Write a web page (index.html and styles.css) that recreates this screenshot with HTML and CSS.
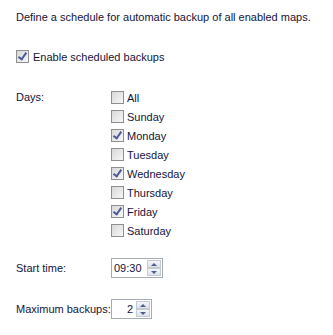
FILE: index.html
```html
<!DOCTYPE html>
<html lang="en">
<head>
  <meta charset="UTF-8" />
  <title>Scheduled Backups</title>
  <link rel="stylesheet" href="styles.css">
</head>
<body>
  <div class="page">
    <p class="intro">Define a schedule for automatic backup of all enabled maps.</p>

    <label class="check enable">
      <span class="box checked"></span>Enable scheduled backups
    </label>

    <div class="row days">
      <span class="label">Days:</span>
      <div class="day-list">
        <label class="check"><span class="box"></span>All</label>
        <label class="check"><span class="box"></span>Sunday</label>
        <label class="check"><span class="box checked"></span>Monday</label>
        <label class="check"><span class="box"></span>Tuesday</label>
        <label class="check"><span class="box checked"></span>Wednesday</label>
        <label class="check"><span class="box"></span>Thursday</label>
        <label class="check"><span class="box checked"></span>Friday</label>
        <label class="check"><span class="box"></span>Saturday</label>
      </div>
    </div>

    <div class="row start">
      <span class="label">Start time:</span>
      <div class="spin time">
        <span class="value">09:30</span>
        <span class="arrows"><span class="up"></span><span class="down"></span></span>
      </div>
    </div>

    <div class="row max">
      <span class="label">Maximum backups:</span>
      <div class="spin count">
        <span class="value">2</span>
        <span class="arrows"><span class="up"></span><span class="down"></span></span>
      </div>
    </div>
  </div>
</body>
</html>
```

FILE: styles.css
```css
body {
  margin: 0;
  background: #fff;
  font-family: "Liberation Sans", Arial, sans-serif;
  font-size: 11px;
  color: #14143a;
}
.page {
  padding: 11px 16px 0 16px;
}
.intro {
  margin: 0 0 23px 0;
  line-height: 13px;
  white-space: nowrap;
}
.check {
  display: flex;
  align-items: center;
  height: 19px;
  white-space: nowrap;
}
.enable {
  margin-bottom: 22px;
}
.enable .box {
  margin-right: 4px;
}
.box {
  width: 11px;
  height: 11px;
  border: 1px solid #8f8f8f;
  background: linear-gradient(135deg, #d8d8d8, #f7f7f7);
  margin-right: 3px;
  position: relative;
  flex-shrink: 0;
}
.box.checked::after {
  content: "";
  position: absolute;
  left: 3px;
  top: 0px;
  width: 3px;
  height: 7px;
  border: solid #4a5a9a;
  border-width: 0 2px 2px 0;
  transform: rotate(35deg);
}
.row {
  display: flex;
}
.label {
  width: 95px;
  line-height: 19px;
  white-space: nowrap;
  flex-shrink: 0;
}
.days {
  margin-bottom: 18px;
}
.start {
  align-items: center;
  margin-bottom: 21px;
}
.max {
  align-items: center;
}
.spin {
  display: flex;
  border: 1px solid #a5acb5;
  height: 18px;
}
.spin .value {
  line-height: 18px;
  padding: 0 2px;
}
.time .value {
  width: 30px;
}
.count .value {
  width: 19px;
  text-align: right;
}
.arrows {
  display: flex;
  flex-direction: column;
  width: 14px;
  margin: 1px;
}
.arrows span {
  flex: 1;
  border: 1px solid #c6cad2;
  background: linear-gradient(#f4f6f9, #dce2ea);
  position: relative;
}
.arrows .up::after, .arrows .down::after {
  content: "";
  position: absolute;
  left: 3px;
  top: 2px;
  border-left: 3px solid transparent;
  border-right: 3px solid transparent;
}
.arrows .up::after {
  border-bottom: 3px solid #4d5e93;
}
.arrows .down::after {
  border-top: 3px solid #4d5e93;
}
```
